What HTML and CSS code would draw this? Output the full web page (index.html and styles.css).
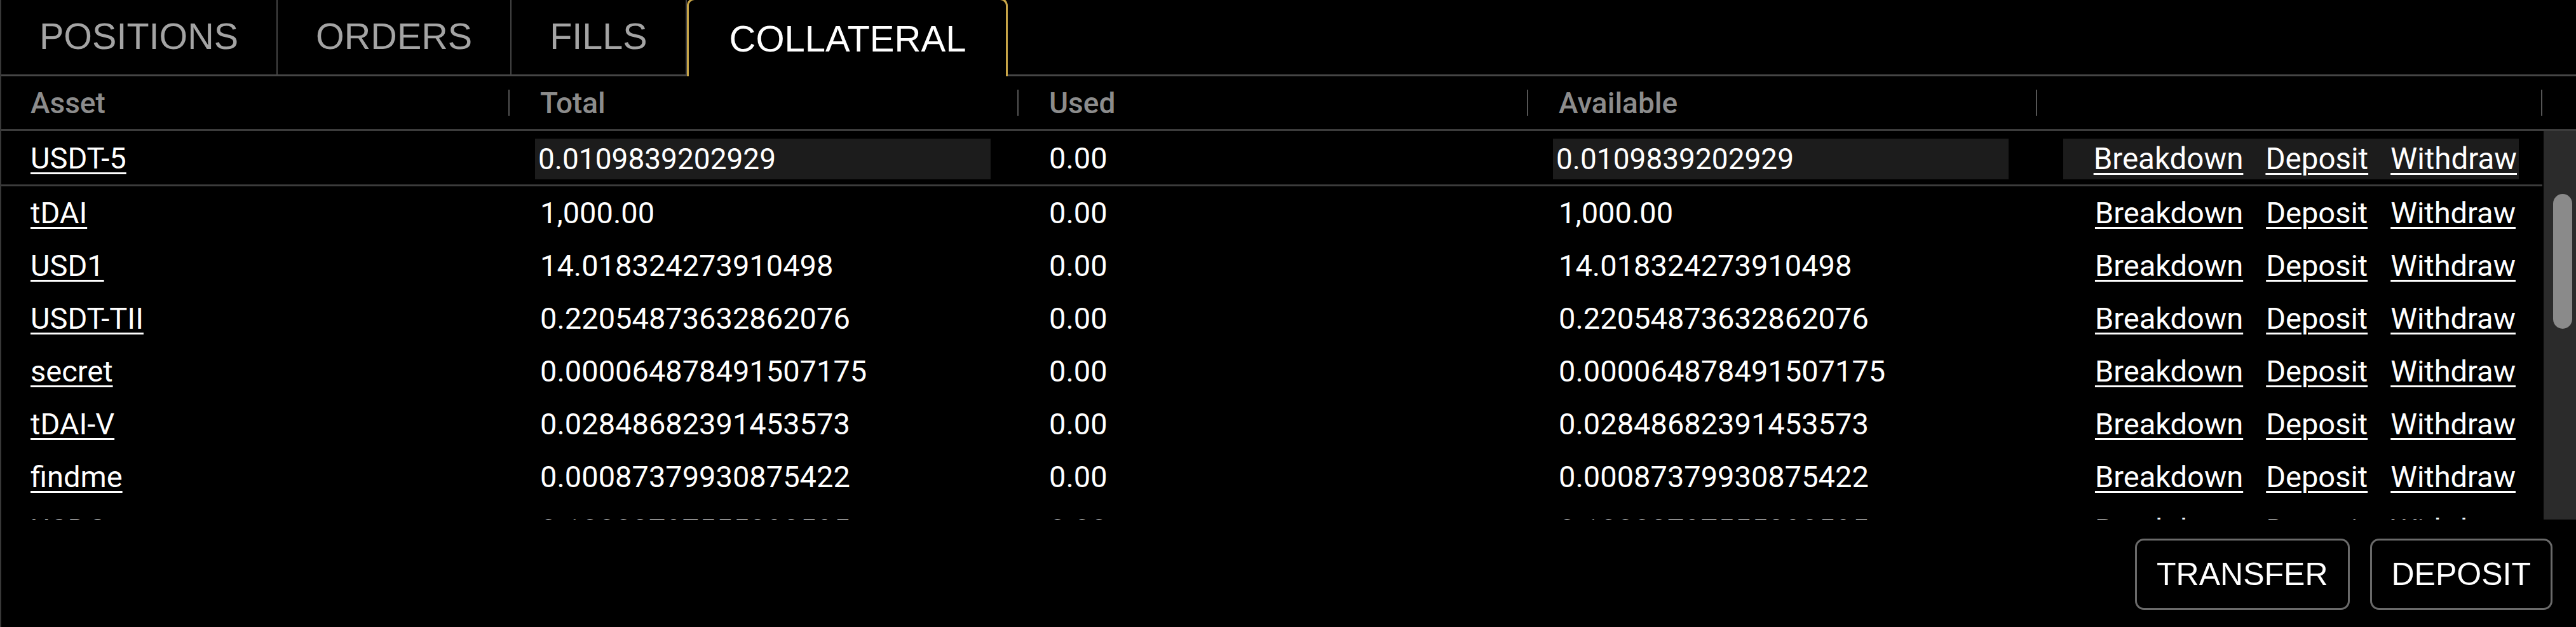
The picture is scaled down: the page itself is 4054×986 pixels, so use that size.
FILE: index.html
```html
<!DOCTYPE html>
<html lang="en">
<head>
<meta charset="utf-8">
<title>Collateral</title>
<link rel="stylesheet" href="styles.css">
</head>
<body>
<div class="app">
  <nav class="tabs">
    <div class="tab">POSITIONS</div>
    <div class="tab">ORDERS</div>
    <div class="tab">FILLS</div>
    <div class="tab active">COLLATERAL</div>
  </nav>

  <div class="thead">
    <div class="th first"><span>Asset</span><i class="sep"></i></div>
    <div class="th"><span>Total</span><i class="sep"></i></div>
    <div class="th"><span>Used</span><i class="sep"></i></div>
    <div class="th"><span>Available</span><i class="sep"></i></div>
    <div class="th"><span></span><i class="sep"></i></div>
    <div class="th-fill"></div>
  </div>

  <div class="tbody">
    <div class="tcol">
      <div class="row pinned">
        <div class="cell first"><a href="#">USDT-5</a></div>
        <div class="cell boxed total"><div class="box">0.0109839202929</div></div>
        <div class="cell">0.00</div>
        <div class="cell boxed avail"><div class="box">0.0109839202929</div></div>
        <div class="cell boxed acts"><div class="box links"><a href="#">Breakdown</a><a href="#">Deposit</a><a href="#">Withdraw</a></div></div>
      </div>
      <div class="scroll">
        <div class="row">
          <div class="cell first"><a href="#">tDAI</a></div>
          <div class="cell">1,000.00</div>
          <div class="cell">0.00</div>
          <div class="cell">1,000.00</div>
          <div class="cell acts links"><a href="#">Breakdown</a><a href="#">Deposit</a><a href="#">Withdraw</a></div>
        </div>
        <div class="row">
          <div class="cell first"><a href="#">USD1</a></div>
          <div class="cell">14.018324273910498</div>
          <div class="cell">0.00</div>
          <div class="cell">14.018324273910498</div>
          <div class="cell acts links"><a href="#">Breakdown</a><a href="#">Deposit</a><a href="#">Withdraw</a></div>
        </div>
        <div class="row">
          <div class="cell first"><a href="#">USDT-TII</a></div>
          <div class="cell">0.22054873632862076</div>
          <div class="cell">0.00</div>
          <div class="cell">0.22054873632862076</div>
          <div class="cell acts links"><a href="#">Breakdown</a><a href="#">Deposit</a><a href="#">Withdraw</a></div>
        </div>
        <div class="row">
          <div class="cell first"><a href="#">secret</a></div>
          <div class="cell">0.000064878491507175</div>
          <div class="cell">0.00</div>
          <div class="cell">0.000064878491507175</div>
          <div class="cell acts links"><a href="#">Breakdown</a><a href="#">Deposit</a><a href="#">Withdraw</a></div>
        </div>
        <div class="row">
          <div class="cell first"><a href="#">tDAI-V</a></div>
          <div class="cell">0.02848682391453573</div>
          <div class="cell">0.00</div>
          <div class="cell">0.02848682391453573</div>
          <div class="cell acts links"><a href="#">Breakdown</a><a href="#">Deposit</a><a href="#">Withdraw</a></div>
        </div>
        <div class="row">
          <div class="cell first"><a href="#">findme</a></div>
          <div class="cell">0.00087379930875422</div>
          <div class="cell">0.00</div>
          <div class="cell">0.00087379930875422</div>
          <div class="cell acts links"><a href="#">Breakdown</a><a href="#">Deposit</a><a href="#">Withdraw</a></div>
        </div>
        <div class="row">
          <div class="cell first"><a href="#">USDC</a></div>
          <div class="cell">0.10003797555393595</div>
          <div class="cell">0.00</div>
          <div class="cell">0.10003797555393595</div>
          <div class="cell acts links"><a href="#">Breakdown</a><a href="#">Deposit</a><a href="#">Withdraw</a></div>
        </div>
      </div>
    </div>
    <div class="track"><div class="thumb"></div></div>
  </div>

  <div class="footer">
    <button class="btn" type="button">TRANSFER</button>
    <button class="btn" type="button">DEPOSIT</button>
  </div>
</div>
</body>
</html>
```

FILE: styles.css
```css
* { box-sizing: border-box; }

html, body {
  margin: 0;
  padding: 0;
  background: #000;
}

body {
  width: 4054px;
  height: 986px;
  overflow: hidden;
  font-family: Roboto, "Liberation Sans", Arial, sans-serif;
  color: #fff;
}

.app {
  height: 986px;
  border-left: 2px solid #383838;
  display: flex;
  flex-direction: column;
}

/* Tabs */
.tabs {
  display: flex;
  height: 123px;
  margin-top: -3px;
  border-bottom: 3px solid #464646;
  flex: 0 0 auto;
  font-family: "Liberation Sans", Arial, sans-serif;
}

.tab {
  display: flex;
  align-items: center;
  padding: 0 60px;
  font-size: 57.5px;
  color: #a4a4a4;
  border-right: 2px solid #444;
  white-space: nowrap;
}

.tab.active {
  color: #fff;
  background: #000;
  border: 3px solid #c9a648;
  border-bottom: none;
  border-radius: 12px 12px 0 0;
  margin-bottom: -3px;
  padding: 0 63px 0 64px;
  font-size: 58px;
}

/* Header */
.thead {
  display: grid;
  grid-template-columns: 800px 801px 802px 801px 795px 1fr;
  height: 86px;
  border-bottom: 3px solid #3c3c3c;
  flex: 0 0 auto;
}

.th {
  display: flex;
  align-items: center;
  justify-content: space-between;
  padding-left: 48px;
  font-size: 46px;
  font-weight: 500;
  color: #8c8c8c;
}

.th.first { padding-left: 46px; }

.sep {
  display: block;
  width: 2px;
  height: 41px;
  background: #555;
}

/* Body */
.tbody {
  display: flex;
  flex: 0 0 auto;
}

.tcol {
  width: 3999px;
  display: flex;
  flex-direction: column;
}

.row {
  display: grid;
  grid-template-columns: 800px 801px 802px 801px 795px;
  height: 83px;
  font-size: 47px;
}

.row.pinned {
  height: 87px;
  border-bottom: 3px solid #3c3c3c;
}

.cell {
  display: flex;
  align-items: center;
  padding-left: 48px;
  white-space: nowrap;
}

.cell.first { padding-left: 46px; }

.cell.acts {
  justify-content: flex-end;
  padding-left: 0;
  padding-right: 42px;
}

.links { gap: 36px; }

.cell.boxed { align-items: stretch; }
.cell.boxed.total { padding: 12px 44px 8px 40px; }
.cell.boxed.avail { padding: 12px 45px 8px 39px; }
.cell.boxed.acts { padding: 12px 37px 8px 41px; }

.box {
  flex: 1;
  display: flex;
  align-items: center;
  background: #1c1c1c;
  padding-left: 5px;
  font-size: 46px;
}

.box.links {
  justify-content: flex-end;
  padding-left: 0;
  padding-right: 3px;
  font-size: 47.5px;
  gap: 35px;
}

a {
  color: #fff;
  text-decoration: underline;
  text-decoration-thickness: 3px;
  text-underline-offset: 6px;
}

.scroll {
  height: 524px;
  overflow: hidden;
}

.track {
  margin-left: 2px;
  width: 51px;
  height: 611px;
  background: #2b2b2b;
  padding-top: 99px;
  padding-left: 15px;
}

.thumb {
  width: 30px;
  height: 212px;
  border-radius: 15px;
  background: #8a8a8a;
}

/* Footer */
.footer {
  display: flex;
  justify-content: flex-end;
  gap: 32px;
  padding: 30px 37px 0 0;
}

.btn {
  height: 112px;
  padding: 0 31px;
  border: 3px solid #6a6a6a;
  border-radius: 14px;
  background: transparent;
  color: #fff;
  font-family: "Liberation Sans", Arial, sans-serif;
  font-size: 50px;
  line-height: 1;
}
```
